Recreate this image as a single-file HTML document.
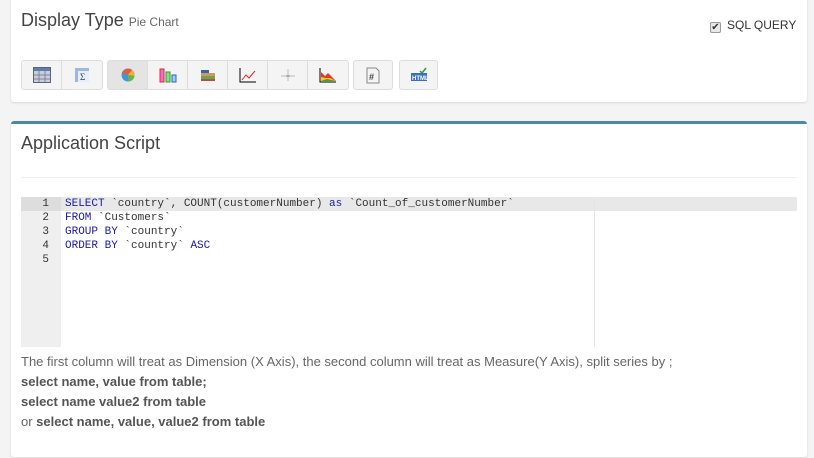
<!DOCTYPE html>
<html><head><style>
*{box-sizing:border-box;margin:0;padding:0}
body{width:814px;height:458px;background:#f4f4f4;font-family:"Liberation Sans",sans-serif;color:#444;position:relative;overflow:hidden}
.p1{position:absolute;left:11px;top:-3px;width:796px;height:105px;background:#fff;border-radius:3px;box-shadow:0 1px 2px rgba(0,0,0,.12)}
.p2{position:absolute;left:11px;top:121px;width:796px;height:336px;background:#fff;border-top:3px solid #4b8aa3;border-radius:3px;box-shadow:0 1px 2px rgba(0,0,0,.12)}
.t1{position:absolute;left:21px;top:10px;font-size:18px;color:#444}
.t1 small{font-size:12px;color:#666}
.sq{position:absolute;left:710px;top:18px;font-size:12px;color:#333}
.cb{display:inline-block;width:11px;height:11px;border:1px solid #999;border-radius:2px;background:#e8e8e8;vertical-align:-1px;margin-right:6px;font-size:10px;line-height:9px;text-align:center}
.grp{position:absolute;top:60px;height:30px;display:flex;border:1px solid #ddd;border-radius:3px;background:#f4f4f4;overflow:hidden}
.grp div{width:40px;height:28px;border-right:1px solid #ddd;display:flex;align-items:center;justify-content:center}
.grp div:last-child{border-right:0}
.grp .act{background:#e4e4e4}
.t2{position:absolute;left:21px;top:133px;font-size:18px;color:#444}
.hr{position:absolute;left:21px;top:177px;width:776px;height:1px;background:#f0f0f0}
.ed{position:absolute;left:21px;top:197px;width:776px;height:150px;font-family:"Liberation Mono",monospace;font-size:11px;line-height:14px}
.gut{position:absolute;left:0;top:0;width:40px;height:150px;background:#efefef;color:#333}
.gut div{text-align:right;padding-right:12px}
.hl{position:absolute;left:0;top:0;width:776px;height:14px;background:#e8e8e8}
.code{position:absolute;left:44px;top:0;color:#333;white-space:pre}
.k{color:#1a1aa6}
.pm{position:absolute;left:573px;top:0;width:1px;height:150px;background:#e4e4e4}
.txt{position:absolute;left:21px;top:352px;font-size:13px;line-height:20px;color:#666}
.txt b{color:#555}
</style></head><body>
<div class="p1"></div>
<div class="t1">Display Type <small>Pie Chart</small></div>
<div class="sq"><span class="cb">✔</span>SQL QUERY</div>
<div class="grp" style="left:21px">
 <div><svg width="18" height="16"><rect x="0.5" y="0.5" width="17" height="15" fill="#ccd" stroke="#567"/><rect x="1" y="1" width="16" height="3" fill="#5a7fb0"/><path d="M1 8h16M1 12h16M6 4v11M12 4v11" stroke="#789"/></svg></div>
 <div><svg width="16" height="16"><rect x="1" y="1" width="14" height="14" fill="#e8eef8"/><rect x="1" y="1" width="3" height="14" fill="#9bb8e0"/><rect x="1" y="1" width="14" height="3" fill="#9bb8e0"/><text x="6" y="13" font-size="9" fill="#247" font-family="Liberation Serif">Σ</text></svg></div>
</div>
<div class="grp" style="left:107px">
 <div class="act"><svg width="16" height="16"><circle cx="8" cy="8" r="6.5" fill="#3a9ad9"/><path d="M8 8L2 6A6.5 6.5 0 0 1 12 3z" fill="#e85a3a"/><path d="M8 8L12 3A6.5 6.5 0 0 1 14.5 9z" fill="#f0b030"/><path d="M8 8L14.5 9A6.5 6.5 0 0 1 8 14.5z" fill="#6ab04c"/></svg></div>
 <div><svg width="18" height="16"><rect x="1" y="2" width="4" height="13" fill="#f6c" stroke="#c33"/><rect x="7" y="5" width="4" height="10" fill="#8d8" stroke="#393"/><rect x="13" y="8" width="4" height="7" fill="#9cf" stroke="#36a"/></svg></div>
 <div><svg width="16" height="16"><rect x="1" y="3" width="8" height="3" fill="#36a"/><rect x="1" y="6" width="14" height="3" fill="#c96"/><rect x="1" y="9" width="14" height="3" fill="#6a4"/><rect x="1" y="12" width="14" height="2" fill="#c44"/></svg></div>
 <div><svg width="18" height="16"><path d="M1 1v14h16" stroke="#000" fill="none"/><path d="M3 13l4-5 3 3 6-7" stroke="#d22" fill="none"/></svg></div>
 <div><svg width="16" height="16"><path d="M1 9h14M8 2v12" stroke="#bbb"/><path d="M6 9h4" stroke="#68a"/></svg></div>
 <div><svg width="18" height="16"><path d="M1 1v14h16" stroke="#000" fill="none"/><path d="M2 14V5l4 4 3-3 4 4 4 4z" fill="#e33"/><path d="M2 14v-4l5 1 4 0 6 3z" fill="#fc0"/><path d="M2 14l6-2 9 2z" fill="#3a3"/></svg></div>
</div>
<div class="grp" style="left:353px;width:40px"><div><svg width="14" height="17"><path d="M1 1h9l3 3v12H1z" fill="#f4f4f4" stroke="#888"/><text x="3" y="13" font-size="9" fill="#444" font-weight="bold">#</text></svg></div></div>
<div class="grp" style="left:399px;width:39px"><div><svg width="18" height="16"><rect x="1" y="6" width="16" height="8" fill="#3a6fc0"/><text x="2" y="13" font-size="6" fill="#fff" font-weight="bold">HTML</text><path d="M10 4l2 2 4-5" stroke="#393" fill="none" stroke-width="1.5"/></svg></div></div>

<div class="p2"></div>
<div class="t2">Application Script</div>
<div class="hr"></div>
<div class="ed">
 <div class="gut"><div>1</div><div>2</div><div>3</div><div>4</div><div>5</div></div>
 <div class="hl" style="left:40px;width:736px"></div>
 <div class="hl" style="width:40px;background:#ddd"></div>
 <div class="gut" style="background:none"><div>1</div></div>
 <div class="pm"></div>
 <div class="code"><span class="k">SELECT</span> `country`, COUNT(customerNumber) <span class="k">as</span> `Count_of_customerNumber`
<span class="k">FROM</span> `Customers`
<span class="k">GROUP BY</span> `country`
<span class="k">ORDER BY</span> `country` <span class="k">ASC</span>
</div>
</div>
<div class="txt">The first column will treat as Dimension (X Axis), the second column will treat as Measure(Y Axis), split series by ;<br><b>select name, value from table;</b><br><b>select name value2 from table</b><br>or <b>select name, value, value2 from table</b></div>
</body></html>
